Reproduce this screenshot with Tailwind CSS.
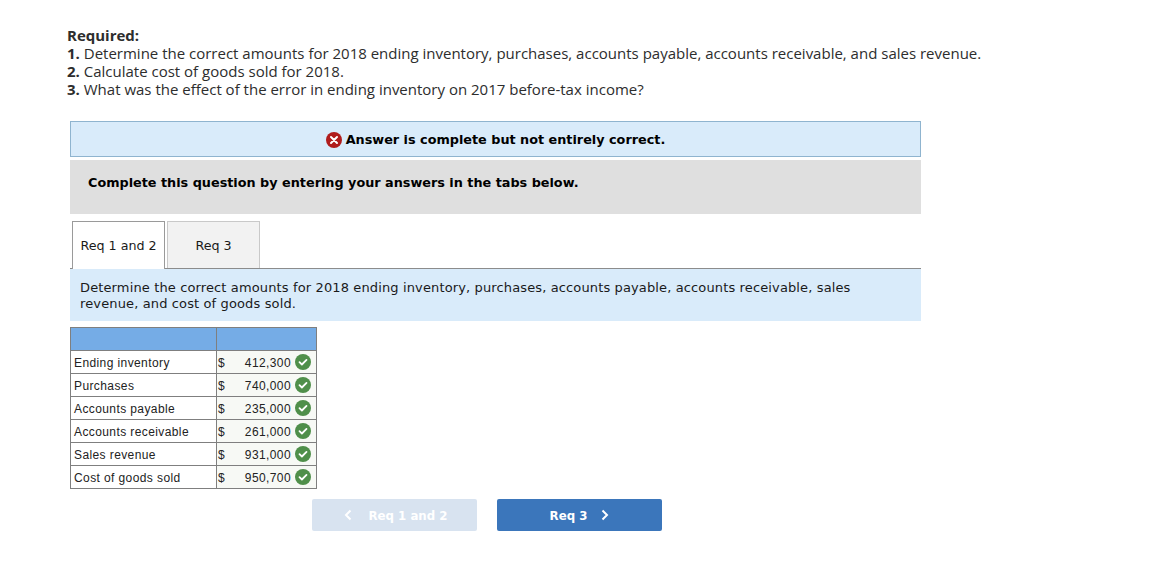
<!DOCTYPE html>
<html lang="en">
<head>
  <meta charset="UTF-8" />
  <title>Required</title>
  <script src="https://cdn.jsdelivr.net/npm/@tailwindcss/browser@4"></script>
</head>
<body class="bg-white text-[#1a1a1a] h-[567px] overflow-hidden">

  <!-- Question -->
  <section class="pt-[26px] pl-[67px] font-['Open_Sans',sans-serif] text-[15px] leading-[18px] text-[#2d2d2d]">
    <p class="font-bold">Required:</p>
    <p><b>1.</b> Determine the correct amounts for 2018 ending inventory, purchases, accounts payable, accounts receivable, and sales revenue.</p>
    <p><b>2.</b> Calculate cost of goods sold for 2018.</p>
    <p><b>3.</b> What was the effect of the error in ending inventory on 2017 before-tax income?</p>
  </section>

  <main class="ml-[70px] w-[851px] mt-[23px] font-['DejaVu_Sans',sans-serif]">
    <!-- Result banner -->
    <div class="h-[36px] pt-[1px] flex items-center justify-center gap-[4px] bg-[#d9ebfa] border border-[#8fb4cf] text-[12.8px] font-bold text-black">
      <svg width="16" height="16" viewBox="0 0 16 16">
        <circle cx="8" cy="8" r="8" fill="#b01c1c"/>
        <path d="M5 5l6 6M11 5l-6 6" stroke="#fff" stroke-width="2" stroke-linecap="round"/>
      </svg>
      <span>Answer is complete but not entirely correct.</span>
    </div>

    <div class="mt-[3px] h-[54px] bg-[#dfdfdf] pl-[18px] pt-[14px] text-[12.8px] leading-[18px] font-bold text-black">
      Complete this question by entering your answers in the tabs below.
    </div>

    <!-- Tabs -->
    <div class="mt-[7px] h-[48px] flex items-end border-b border-[#8c8c8c] pl-[2px] gap-[2px] text-[12.7px]">
      <div class="h-[48px] w-[93px] -mb-px flex items-center justify-center bg-white border border-b-0 border-[#9a9a9a]">Req 1 and 2</div>
      <div class="h-[47px] w-[93px] pt-[1px] flex items-center justify-center bg-[#f2f2f2] border border-b-0 border-[#c9c9c9]">Req 3</div>
    </div>

    <div class="h-[52px] bg-[#d9ebfa] pl-[10px] pt-[11px] text-[13px] tracking-[0.13px] leading-[16px] text-[#1a1a1a]">
      <p class="w-[790px]">Determine the correct amounts for 2018 ending inventory, purchases, accounts payable, accounts receivable, sales revenue, and cost of goods sold.</p>
    </div>

    <!-- Answer table -->
    <table class="mt-[6px] w-[246px] table-fixed border-collapse font-['Liberation_Sans',sans-serif] text-[12px] tracking-[0.4px] text-[#222]">
      <colgroup><col class="w-[146px]"/><col class="w-[100px]"/></colgroup>
      <thead>
        <tr class="h-[23px] bg-[#75ace6]">
          <th class="border border-[#7f7f7f]"></th>
          <th class="border border-[#7f7f7f]"></th>
        </tr>
      </thead>
      <tbody>
        <tr class="h-[23px]">
          <td class="border border-[#7f7f7f] pl-[3px] pt-[1px]">Ending inventory</td>
          <td class="border border-[#7f7f7f] bg-[#f7f9f5] pt-[1px]"><div class="flex items-center pl-[1px] pr-[5px]"><span>$</span><span class="ml-auto mr-[4px]">412,300</span><svg class="-translate-y-px" width="16" height="16" viewBox="0 0 16 16"><circle cx="8" cy="8" r="8" fill="#4f8f4a"/><path d="M4.5 8.2l2.4 2.3 4.6-4.6" fill="none" stroke="#fff" stroke-width="1.8" stroke-linecap="round" stroke-linejoin="round"/></svg></div></td>
        </tr>
        <tr class="h-[23px]">
          <td class="border border-[#7f7f7f] pl-[3px] pt-[1px]">Purchases</td>
          <td class="border border-[#7f7f7f] bg-[#f7f9f5] pt-[1px]"><div class="flex items-center pl-[1px] pr-[5px]"><span>$</span><span class="ml-auto mr-[4px]">740,000</span><svg class="-translate-y-px" width="16" height="16" viewBox="0 0 16 16"><circle cx="8" cy="8" r="8" fill="#4f8f4a"/><path d="M4.5 8.2l2.4 2.3 4.6-4.6" fill="none" stroke="#fff" stroke-width="1.8" stroke-linecap="round" stroke-linejoin="round"/></svg></div></td>
        </tr>
        <tr class="h-[23px]">
          <td class="border border-[#7f7f7f] pl-[3px] pt-[1px]">Accounts payable</td>
          <td class="border border-[#7f7f7f] bg-[#f7f9f5] pt-[1px]"><div class="flex items-center pl-[1px] pr-[5px]"><span>$</span><span class="ml-auto mr-[4px]">235,000</span><svg class="-translate-y-px" width="16" height="16" viewBox="0 0 16 16"><circle cx="8" cy="8" r="8" fill="#4f8f4a"/><path d="M4.5 8.2l2.4 2.3 4.6-4.6" fill="none" stroke="#fff" stroke-width="1.8" stroke-linecap="round" stroke-linejoin="round"/></svg></div></td>
        </tr>
        <tr class="h-[23px]">
          <td class="border border-[#7f7f7f] pl-[3px] pt-[1px]">Accounts receivable</td>
          <td class="border border-[#7f7f7f] bg-[#f7f9f5] pt-[1px]"><div class="flex items-center pl-[1px] pr-[5px]"><span>$</span><span class="ml-auto mr-[4px]">261,000</span><svg class="-translate-y-px" width="16" height="16" viewBox="0 0 16 16"><circle cx="8" cy="8" r="8" fill="#4f8f4a"/><path d="M4.5 8.2l2.4 2.3 4.6-4.6" fill="none" stroke="#fff" stroke-width="1.8" stroke-linecap="round" stroke-linejoin="round"/></svg></div></td>
        </tr>
        <tr class="h-[23px]">
          <td class="border border-[#7f7f7f] pl-[3px] pt-[1px]">Sales revenue</td>
          <td class="border border-[#7f7f7f] bg-[#f7f9f5] pt-[1px]"><div class="flex items-center pl-[1px] pr-[5px]"><span>$</span><span class="ml-auto mr-[4px]">931,000</span><svg class="-translate-y-px" width="16" height="16" viewBox="0 0 16 16"><circle cx="8" cy="8" r="8" fill="#4f8f4a"/><path d="M4.5 8.2l2.4 2.3 4.6-4.6" fill="none" stroke="#fff" stroke-width="1.8" stroke-linecap="round" stroke-linejoin="round"/></svg></div></td>
        </tr>
        <tr class="h-[23px]">
          <td class="border border-[#7f7f7f] pl-[3px] pt-[1px]">Cost of goods sold</td>
          <td class="border border-[#7f7f7f] bg-[#f7f9f5] pt-[1px]"><div class="flex items-center pl-[1px] pr-[5px]"><span>$</span><span class="ml-auto mr-[4px]">950,700</span><svg class="-translate-y-px" width="16" height="16" viewBox="0 0 16 16"><circle cx="8" cy="8" r="8" fill="#4f8f4a"/><path d="M4.5 8.2l2.4 2.3 4.6-4.6" fill="none" stroke="#fff" stroke-width="1.8" stroke-linecap="round" stroke-linejoin="round"/></svg></div></td>
        </tr>
      </tbody>
    </table>

    <!-- Prev / next -->
    <div class="mt-[10px] ml-[242px] flex gap-[20px] text-[11.8px] font-bold text-white">
      <button class="w-[165px] h-[32px] pl-[3px] rounded-[2px] bg-[#d8e3f0] flex items-center justify-center gap-[16px]">
        <svg width="8" height="12" viewBox="0 0 8 12"><path d="M6.5 1.5L2 6l4.5 4.5" fill="none" stroke="#fff" stroke-width="2"/></svg>
        <span class="pt-[3px]">Req 1 and 2</span>
      </button>
      <button class="w-[165px] h-[32px] rounded-[2px] bg-[#3b76bb] flex items-center justify-center gap-[14px]">
        <span class="pt-[3px]">Req 3</span>
        <svg width="8" height="12" viewBox="0 0 8 12"><path d="M1.5 1.5L6 6l-4.5 4.5" fill="none" stroke="#fff" stroke-width="2"/></svg>
      </button>
    </div>
  </main>

</body>
</html>
